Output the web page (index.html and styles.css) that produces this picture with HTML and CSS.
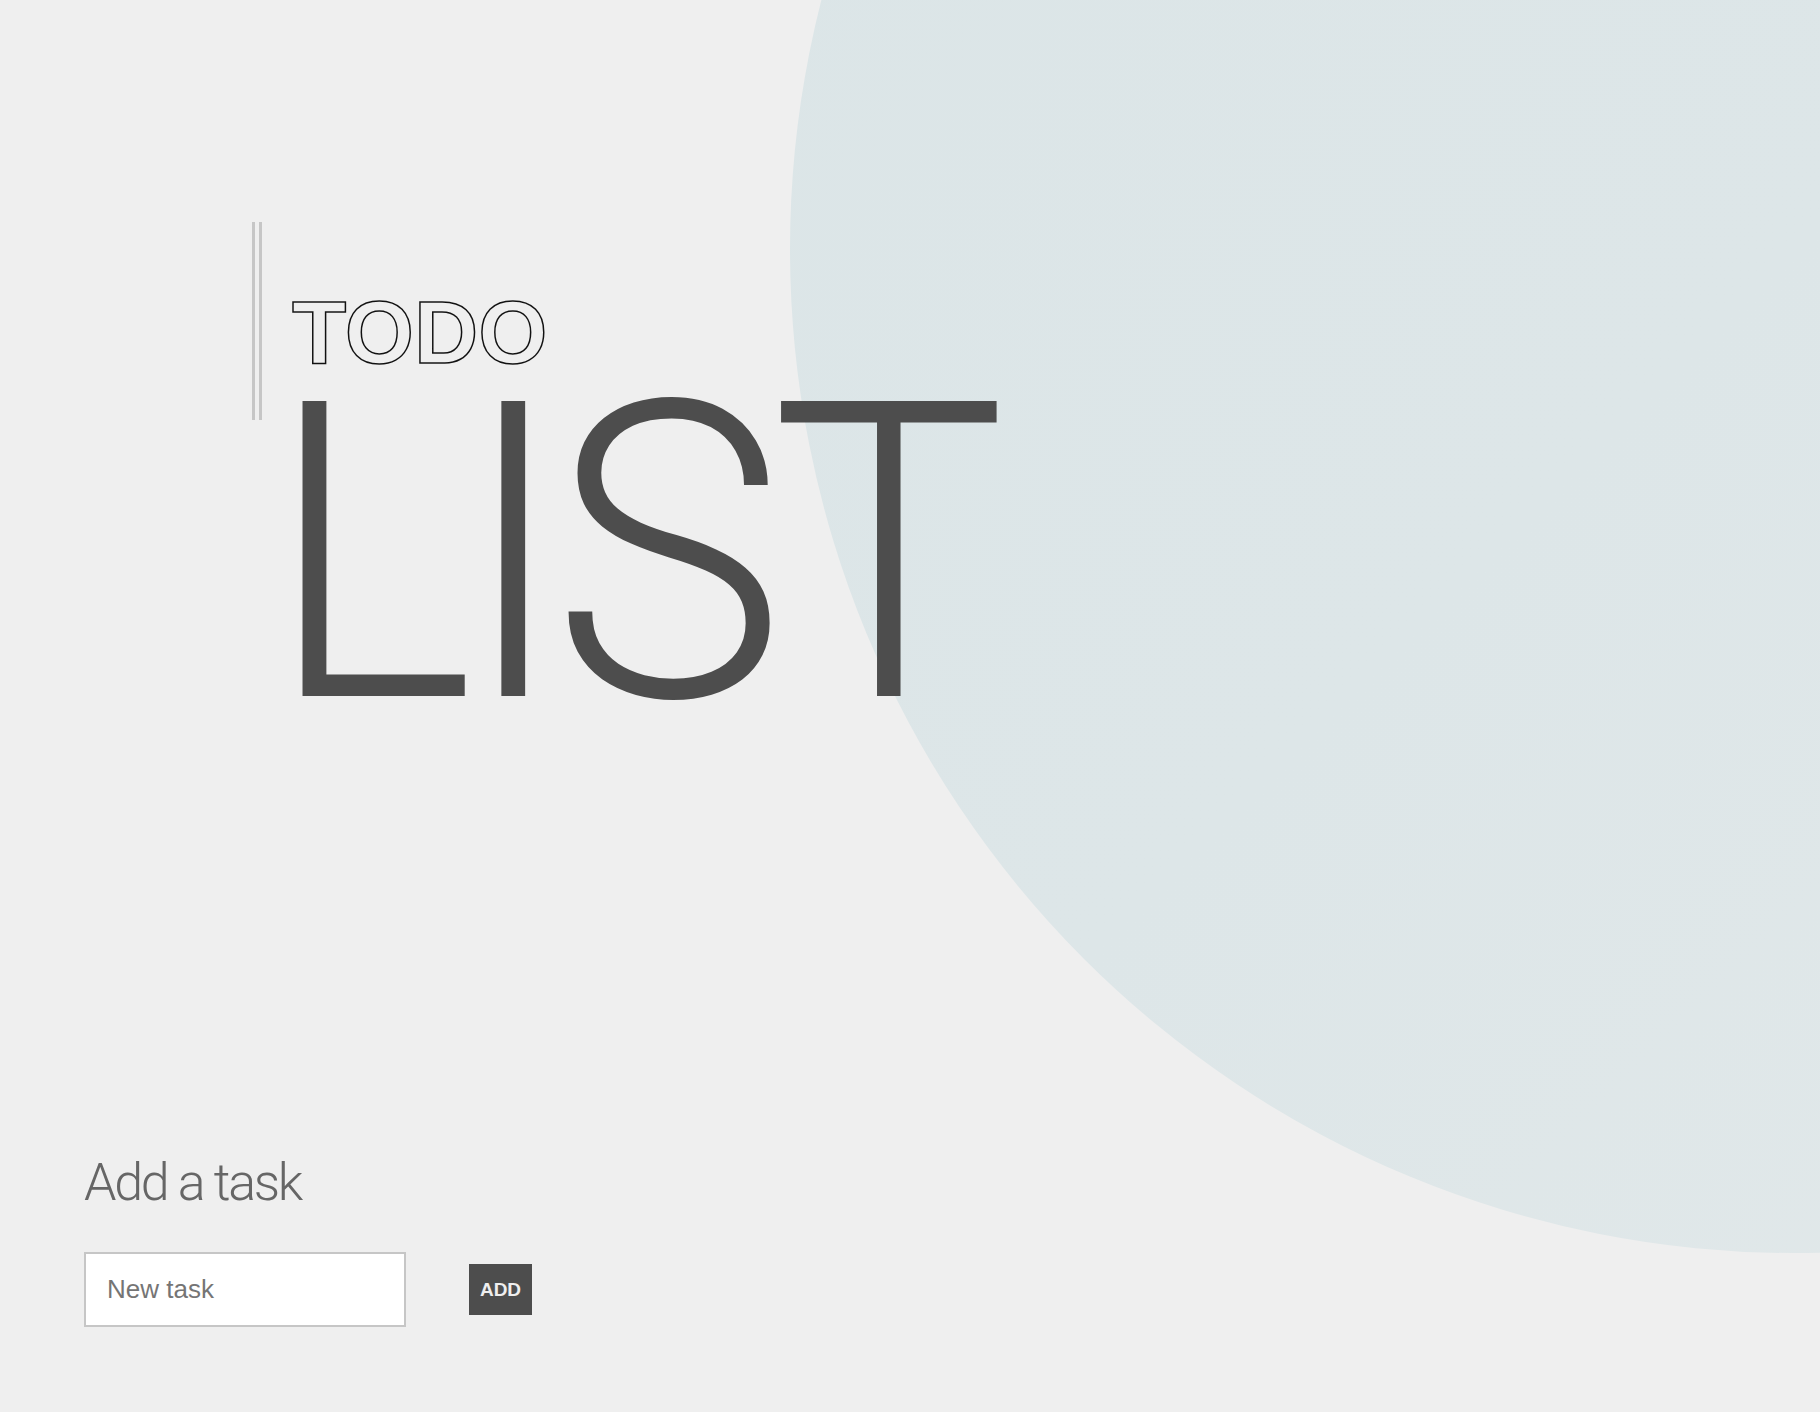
FILE: index.html
```html
<!DOCTYPE html>
<html lang="en">
<head>
    <meta charset="UTF-8">
    <meta name="viewport" content="width=device-width, initial-scale=1.0">
    <title>Todo List</title>
    <link rel="stylesheet" href="styles.css">
</head>
<body>
    <div class="backdrop"></div>
    <header class="hero">
        <div class="hero-mark">
            <h1 class="todo">TODO</h1>
        </div>
        <p class="list">LIST</p>
    </header>
    <main class="add-task">
        <h2>Add a task</h2>
        <form class="task-form" onsubmit="return false;">
            <input type="text" class="task-input" placeholder="New task">
            <button type="submit" class="task-btn">Add</button>
        </form>
    </main>
</body>
</html>
```

FILE: styles.css
```css
* {
    margin: 0;
    padding: 0;
    box-sizing: border-box;
}

html, body {
    height: 100%;
}

body {
    background-color: #efefef;
    font-family: Roboto, "Liberation Sans", sans-serif;
    position: relative;
    overflow: hidden;
    display: flex;
    flex-direction: column;
}

/* big pale circle in the top right corner */
.backdrop {
    position: absolute;
    top: -755px;
    right: -978px;
    width: 2008px;
    height: 2008px;
    border-radius: 50%;
    background: linear-gradient(135deg, #dbe5e7 0%, #dde6e8 50%, #e3e9ea 100%);
    z-index: 0;
}

.hero {
    position: relative;
    z-index: 1;
    padding: 222px 0 0 252px;
}

.hero-mark {
    border-left: 10px double #c6c6c6;
    height: 198px;
    padding: 66px 0 0 30px;
}

.todo {
    font-family: "Liberation Sans", Arial, sans-serif;
    font-weight: 700;
    font-size: 89px;
    line-height: 88px;
    color: transparent;
    -webkit-text-stroke: 1.5px #111;
}

.list {
    margin: -73px 0 0 15px;
    font-family: Roboto, sans-serif;
    font-weight: 300;
    font-size: 415px;
    line-height: 415px;
    letter-spacing: -15px;
    color: #4d4d4d;
    transform: scaleX(0.95);
    transform-origin: left center;
}

.add-task {
    position: relative;
    z-index: 1;
    margin-top: auto;
    padding: 0 0 85px 84px;
}

.add-task h2 {
    font-weight: 300;
    font-size: 52px;
    line-height: 53px;
    letter-spacing: -2.3px;
    color: #666;
    margin-bottom: 43px;
}

.task-form {
    display: flex;
    align-items: center;
    gap: 63px;
}

.task-input {
    width: 322px;
    height: 75px;
    border: 2px solid #c6c6c6;
    background: #fff;
    padding: 0 21px;
    font-family: "Liberation Sans", Arial, sans-serif;
    font-size: 26px;
    color: #333;
    outline: none;
}

.task-input::placeholder {
    color: #757575;
}

.task-btn {
    width: 63px;
    height: 51px;
    border: none;
    background-color: #4d4d4d;
    color: #eee;
    font-family: "Liberation Sans", Arial, sans-serif;
    font-weight: 700;
    font-size: 19px;
    text-transform: uppercase;
    cursor: pointer;
}
```
